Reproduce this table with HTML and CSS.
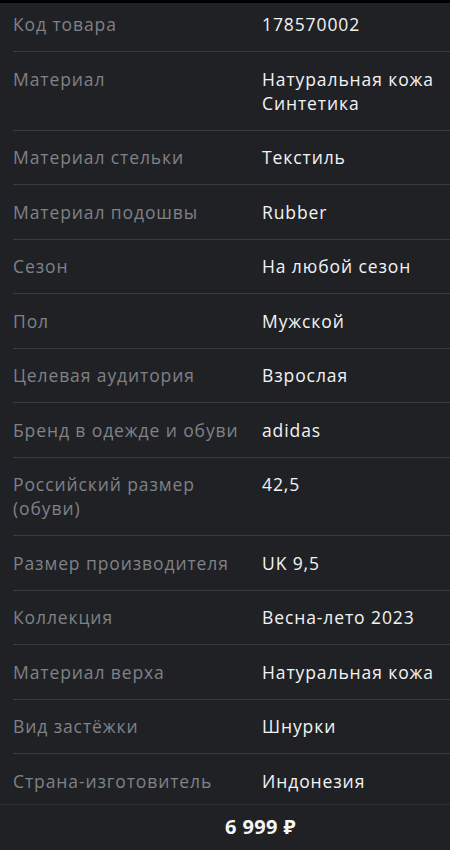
FILE: index.html
```html
<!DOCTYPE html>
<html lang="ru">
<head>
<meta charset="utf-8">
<title>Характеристики</title>
<link rel="stylesheet" href="styles.css">
</head>
<body>
<div class="topbar"></div>
<dl class="specs">
  <div class="row first"><dt>Код товара</dt><dd>178570002</dd></div>
  <div class="row"><dt>Материал</dt><dd>Натуральная кожа<br>Синтетика</dd></div>
  <div class="row"><dt>Материал стельки</dt><dd>Текстиль</dd></div>
  <div class="row"><dt>Материал подошвы</dt><dd>Rubber</dd></div>
  <div class="row"><dt>Сезон</dt><dd>На любой сезон</dd></div>
  <div class="row"><dt>Пол</dt><dd>Мужской</dd></div>
  <div class="row"><dt>Целевая аудитория</dt><dd>Взрослая</dd></div>
  <div class="row"><dt>Бренд в одежде и обуви</dt><dd>adidas</dd></div>
  <div class="row"><dt>Российский размер<br>(обуви)</dt><dd>42,5</dd></div>
  <div class="row"><dt>Размер производителя</dt><dd>UK 9,5</dd></div>
  <div class="row"><dt>Коллекция</dt><dd>Весна-лето 2023</dd></div>
  <div class="row"><dt>Материал верха</dt><dd>Натуральная кожа</dd></div>
  <div class="row"><dt>Вид застёжки</dt><dd>Шнурки</dd></div>
  <div class="row last"><dt>Страна-изготовитель</dt><dd>Индонезия</dd></div>
</dl>
<div class="pricebar"><span class="price">6 999 ₽</span></div>
</body>
</html>
```
FILE: styles.css
```css
html, body {
  margin: 0;
  padding: 0;
  background: #1f2125;
  height: 100%;
  overflow: hidden;
}
body {
  font-family: "Open Sans", "Noto Sans", sans-serif;
  font-size: 17.5px;
  line-height: 24px;
  width: 450px;
}
.topbar {
  height: 3px;
  background: #000;
}
.specs {
  margin: 0;
  padding: 0 0 0 13px;
}
.row {
  display: grid;
  grid-template-columns: 249px 1fr;
  padding: 14.75px 0;
  border-bottom: 1px solid #393b40;
}
.row.first {
  padding-top: 9.25px;
}
.row.last {
  border-bottom: none;
  padding-bottom: 11px;
}
dt {
  color: #7f8287;
  margin: 0;
  letter-spacing: 0.9px;
}
dd {
  color: #f3f3f3;
  margin: 0;
  letter-spacing: 0.9px;
}
.pricebar {
  border-top: 1px solid #2f3135;
  height: 44px;
  display: flex;
  align-items: center;
  padding-left: 225px;
}
.price {
  color: #f5f5f5;
  font-weight: 700;
  font-size: 20px;
  letter-spacing: 0.4px;
}
```
